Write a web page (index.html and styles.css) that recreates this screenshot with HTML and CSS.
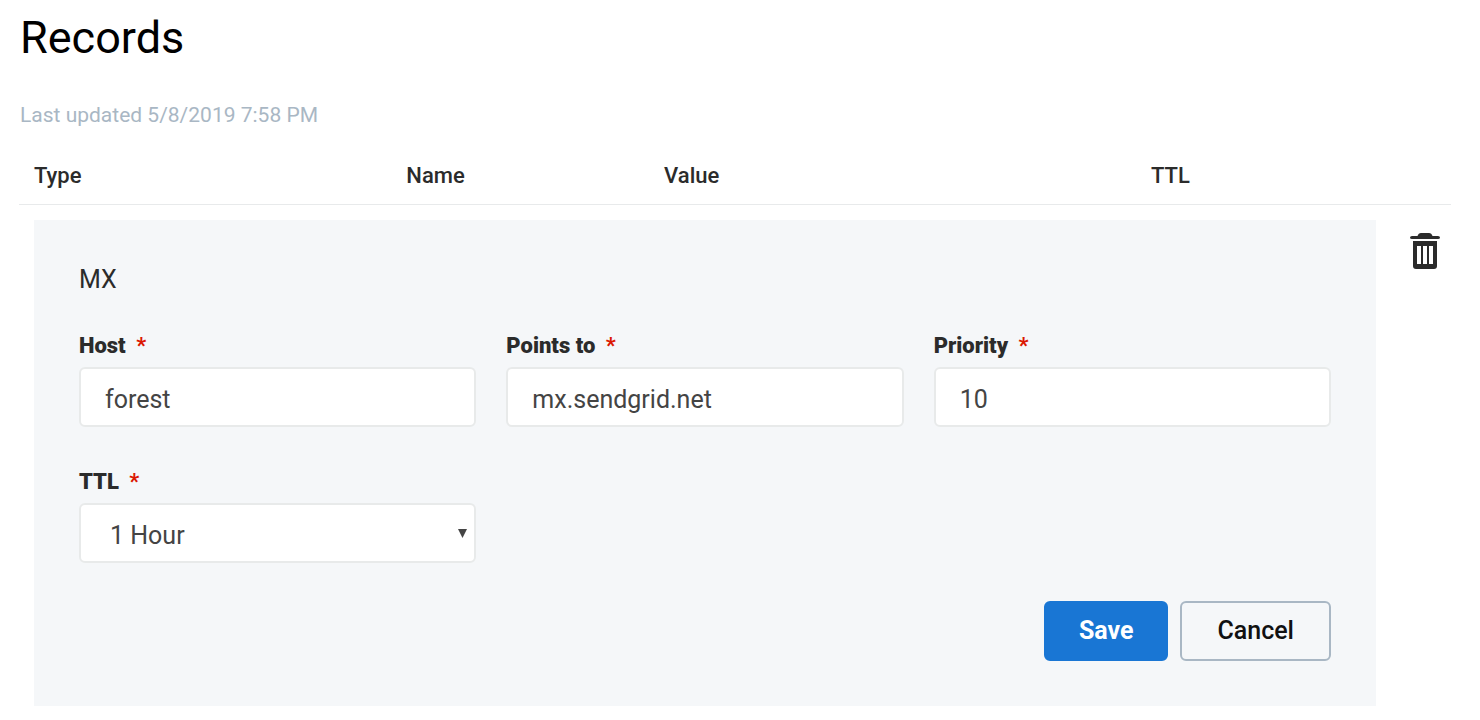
FILE: index.html
```html
<!DOCTYPE html>
<html lang="en">
<head>
<meta charset="utf-8">
<meta name="viewport" content="width=device-width, initial-scale=1">
<title>Records</title>
<link rel="stylesheet" href="styles.css">
</head>
<body>
<main class="page">
  <h1 class="title">Records</h1>
  <p class="updated">Last updated 5/8/2019 7:58 PM</p>
  <table class="records">
    <colgroup>
      <col class="col-type"><col class="col-name"><col class="col-value"><col class="col-ttl"><col class="col-action">
    </colgroup>
    <thead>
      <tr><th scope="col">Type</th><th scope="col">Name</th><th scope="col">Value</th><th scope="col">TTL</th><th></th></tr>
    </thead>
    <tbody>
      <tr>
        <td colspan="4">
          <form class="panel">
            <p class="record-type">MX</p>
            <div class="fields">
              <div class="field">
                <label class="label" for="host">Host <span class="required">*</span></label>
                <input class="control" id="host" type="text" value="forest">
              </div>
              <div class="field">
                <label class="label" for="points">Points to <span class="required">*</span></label>
                <input class="control" id="points" type="text" value="mx.sendgrid.net">
              </div>
              <div class="field">
                <label class="label" for="priority">Priority <span class="required">*</span></label>
                <input class="control" id="priority" type="text" value="10">
              </div>
              <div class="field">
                <label class="label" for="ttl">TTL <span class="required">*</span></label>
                <div class="select-wrap">
                  <select class="control select" id="ttl"><option>1 Hour</option></select>
                  <svg class="arrow" viewBox="0 0 9 9" aria-hidden="true"><path d="M0 0h9L4.500 9z"/></svg>
                </div>
              </div>
            </div>
            <div class="actions">
              <button class="button button-save" type="button">Save</button>
              <button class="button button-cancel" type="button">Cancel</button>
            </div>
          </form>
        </td>
        <td class="action-cell">
          <button class="delete" type="button" aria-label="Delete record">
            <svg class="trash" viewBox="0 0 30 36" aria-hidden="true">
              <path d="M7.500 3Q8.500 0 11 0h8q2.500 0 3.500 3h5.500q2 0 2 1.500T28 6H2Q0 6 0 4.500T2 3z"/>
              <path fill-rule="evenodd" d="M3 8h24v25q0 3-3 3H6q-3 0-3-3zM7 13v18h4V13zm6 0v18h4V13zm6 0v18h4V13z"/>
            </svg>
          </button>
        </td>
      </tr>
    </tbody>
  </table>
</main>
</body>
</html>
```
FILE: styles.css
```css
* { box-sizing: border-box; }

body {
  margin: 0;
  background: #fff;
  color: #2b2b2b;
  font-family: Roboto, "Liberation Sans", sans-serif;
  font-size: 25px;
  line-height: 28px;
}

.page { padding: 12px 29px 14px 19px; }

.title {
  margin: 0;
  padding-left: 1px;
  color: #000;
  font-size: 45px;
  font-weight: 400;
  line-height: 52px;
}

.updated {
  margin: 39px 0 37px;
  padding-left: 1px;
  color: #a9b7c4;
  font-size: 21px;
  line-height: 24px;
}

.records {
  width: 100%;
  table-layout: fixed;
  border-collapse: collapse;
}

.col-type { width: 26%; }
.col-name { width: 18%; }
.col-value { width: 34%; }
.col-action { width: 60px; }

.records th {
  height: 40px;
  padding: 0 15px 15px;
  border-bottom: 1px solid #e8eaeb;
  font-size: 22px;
  font-weight: 500;
  line-height: 24px;
  text-align: left;
}

.records td { padding: 15px 15px 0; vertical-align: top; }
.records .action-cell { padding: 28px 0 0 19px; }

.panel { padding: 46px 45px 45px; background: #f5f7f9; }

.record-type { margin: 0 0 40px; }

.fields {
  display: grid;
  grid-template-columns: repeat(3, minmax(0, 1fr));
  gap: 43px 30px;
}

.field { display: grid; gap: 9px; }

.label {
  font-size: 22px;
  font-weight: 900;
  line-height: 24px;
}

.required { margin-left: 5px; color: #db1802; font-weight: 700; }

.control {
  width: 100%;
  height: 60px;
  padding: 6px 24px 0;
  border: 2px solid #e8eaea;
  border-radius: 6px;
  background: #fff;
  color: #444;
  font: inherit;
}

.select-wrap { position: relative; }
.select { appearance: none; padding-left: 29px; }

.arrow {
  position: absolute;
  top: 26px;
  right: 9px;
  width: 9px;
  height: 9px;
  fill: #444;
  pointer-events: none;
}

.actions {
  display: flex;
  justify-content: flex-end;
  gap: 12px;
  margin-top: 38px;
}

.button {
  height: 60px;
  padding: 0 33px;
  border: 2px solid #1976d4;
  border-radius: 6px;
  font: inherit;
}

.button-save { background: #1976d4; color: #fff; font-weight: 700; }
.button-cancel { padding: 0 35px; border-color: #a9b7c4; background: transparent; color: #111; font-weight: 500; }

.delete {
  display: block;
  padding: 0;
  border: 0;
  background: none;
}

.trash { display: block; width: 30px; height: 36px; fill: #2b2b2b; }
```
